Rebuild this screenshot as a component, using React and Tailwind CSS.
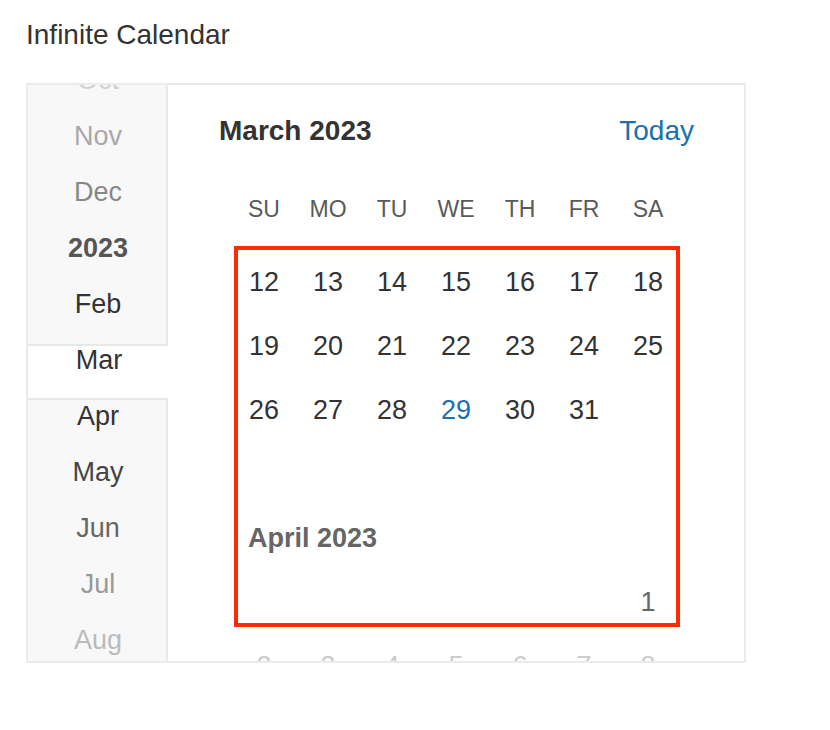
const topMonths = [
  { label: 'Oct', cls: 'text-[#d0d0d0]' },
  { label: 'Nov', cls: 'text-[#a8a8a8]' },
  { label: 'Dec', cls: 'text-[#888]' },
  { label: '2023', cls: 'text-[#555] font-bold' },
  { label: 'Feb', cls: 'text-[#333]' },
];

const bottomMonths = [
  { label: 'Apr', cls: 'text-[#333]' },
  { label: 'May', cls: 'text-[#444]' },
  { label: 'Jun', cls: 'text-[#666]' },
  { label: 'Jul', cls: 'text-[#999]' },
  { label: 'Aug', cls: 'text-[#bbb]' },
];

const weekdays = ['SU', 'MO', 'TU', 'WE', 'TH', 'FR', 'SA'];

const marchRows = [
  [12, 13, 14, 15, 16, 17, 18],
  [19, 20, 21, 22, 23, 24, 25],
  [26, 27, 28, 29, 30, 31, null],
];

function MonthItem({ month }) {
  return (
    <div className={`h-[56px] leading-[56px] text-center text-[27px] pl-[2px] ${month.cls}`}>
      {month.label}
    </div>
  );
}

function DayRow({ days, cls = 'text-[#333]' }) {
  return (
    <div className="grid grid-cols-7 h-[64px]">
      {days.map((d, i) => (
        <div
          key={i}
          className={`flex items-center justify-center text-[27px] ${d === 29 ? 'text-[#1a70b0]' : cls}`}
        >
          {d}
        </div>
      ))}
    </div>
  );
}

export default function App() {
  return (
    <div className="min-h-[730px] bg-white pl-[26px] pt-[19px] font-['Liberation_Sans',Arial,sans-serif]">
      <h1 className="text-[28px] leading-[32px] text-[#333] font-normal">Infinite Calendar</h1>

      <div className="relative mt-[32px] flex w-[720px] h-[580px] border-2 border-[#ebebeb] overflow-hidden">
        {/* Month sidebar */}
        <div className="flex w-[140px] flex-col shrink-0">
          <div className="h-[261px] overflow-hidden bg-[#f8f8f8] border-r-2 border-b-2 border-[#e8e8e8]">
            <div className="-mt-[33px]">
              {topMonths.map((m) => (
                <MonthItem key={m.label} month={m} />
              ))}
            </div>
          </div>
          <div className="h-[52px] bg-white pl-[2px] pt-[1px] text-center text-[27px] leading-[26px] text-[#333]">Mar</div>
          <div className="flex-1 overflow-hidden bg-[#f8f8f8] border-r-2 border-t-2 border-[#e8e8e8]">
            <div className="-mt-[12px]">
              {bottomMonths.map((m) => (
                <MonthItem key={m.label} month={m} />
              ))}
            </div>
          </div>
        </div>

        {/* Calendar */}
        <div className="flex flex-1 flex-col">
          <div className="flex h-[92px] items-center justify-between pl-[51px] pr-[50px]">
            <span className="text-[28px] font-bold text-[#333]">March 2023</span>
            <span className="text-[28px] text-[#1a70b0]">Today</span>
          </div>
          <div className="grid grid-cols-7 h-[64px] px-[64px]">
            {weekdays.map((w) => (
              <div key={w} className="flex items-center justify-center text-[23px] text-[#5a5a5a]">
                {w}
              </div>
            ))}
          </div>
          <div className="flex-1 overflow-hidden px-[64px] pt-[9px]">
            {marchRows.map((r, i) => (
              <DayRow key={i} days={r} />
            ))}
            <div className="h-[64px]" />
            <div className="flex h-[64px] items-center pl-[16px] text-[27px] font-bold text-[#666]">April 2023</div>
            <DayRow days={[null, null, null, null, null, null, 1]} cls="text-[#666]" />
            <DayRow days={[2, 3, 4, 5, 6, 7, 8]} cls="text-[#ccc]" />
          </div>
        </div>

        {/* highlight annotation */}
        <div className="pointer-events-none absolute left-[206px] top-[161px] h-[381px] w-[446px] border-4 border-[#ff2a00]" />
      </div>
    </div>
  );
}
